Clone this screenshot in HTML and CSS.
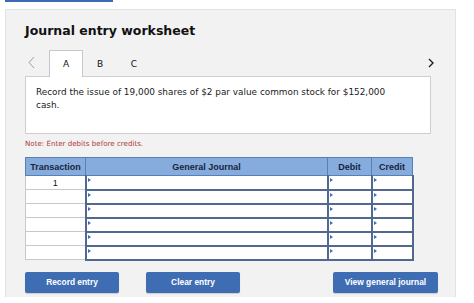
FILE: index.html
```html
<!DOCTYPE html>
<html>
<head>
<meta charset="utf-8">
<link rel="stylesheet" href="styles.css">
</head>
<body>
<div class="topbar"></div>
<div class="panel">
  <h1 class="title">Journal entry worksheet</h1>
  <div class="tabs">
    <span class="nav prev">
      <svg width="7" height="13" viewBox="0 0 7 13"><path d="M6 1 L1 6.5 L6 12" fill="none" stroke="#a0a0a0" stroke-width="1"/></svg>
    </span>
    <span class="tab active">A</span>
    <span class="tab">B</span>
    <span class="tab">C</span>
    <span class="spacer"></span>
    <span class="nav next">
      <svg width="6" height="10" viewBox="0 0 6 10"><path d="M1 1 L5 5 L1 9" fill="none" stroke="#222" stroke-width="1.4"/></svg>
    </span>
  </div>
  <div class="question">Record the issue of 19,000 shares of $2 par value common stock for $152,000 cash.</div>
  <div class="note">Note: Enter debits before credits.</div>
  <table class="journal">
    <thead>
      <tr><th class="c-tr">Transaction</th><th class="c-gj">General Journal</th><th class="c-dr">Debit</th><th class="c-cr">Credit</th></tr>
    </thead>
    <tbody>
      <tr><td class="tr">1</td><td class="in"></td><td class="in"></td><td class="in"></td></tr>
      <tr><td class="tr"></td><td class="in"></td><td class="in"></td><td class="in"></td></tr>
      <tr><td class="tr"></td><td class="in"></td><td class="in"></td><td class="in"></td></tr>
      <tr><td class="tr"></td><td class="in"></td><td class="in"></td><td class="in"></td></tr>
      <tr><td class="tr"></td><td class="in"></td><td class="in"></td><td class="in"></td></tr>
      <tr><td class="tr"></td><td class="in"></td><td class="in"></td><td class="in"></td></tr>
    </tbody>
  </table>
  <div class="buttons">
    <button class="btn b-record">Record entry</button>
    <button class="btn b-clear">Clear entry</button>
    <span class="spacer"></span>
    <button class="btn b-view">View general journal</button>
  </div>
</div>
</body>
</html>
```
FILE: styles.css
```css
html, body { margin: 0; padding: 0; background: #fff; }
body { font-family: "DejaVu Sans", Verdana, sans-serif; color: #111; }

.topbar { margin-left: 5px; width: 108px; height: 2px; background: #3d6bb3; }

.panel {
  margin: 7px 0 0 5px;
  width: 451px;
  height: 288px;
  background: #f2f2f2;
  border: 1px solid #e2e2e2;
  border-bottom: none;
  box-sizing: border-box;
  padding: 0 15px 0 19px;
}

.title {
  margin: 0;
  padding-top: 13px;
  font-size: 12.5px;
  font-weight: bold;
  line-height: 16px;
  color: #111;
}

.tabs {
  display: flex;
  align-items: stretch;
  height: 27px;
  margin-top: 10px;
}
.nav { display: flex; align-items: center; }
.prev { width: 24px; padding-left: 3px; box-sizing: border-box; }
.next { width: 12px; padding-top: 1px; }
.tab {
  width: 34px;
  display: flex;
  align-items: center;
  justify-content: center;
  font-size: 9px;
  font-family: "DejaVu Sans", Verdana, sans-serif;
  box-sizing: border-box;
  border: 1px solid transparent;
  border-bottom: none;
  position: relative;
  top: 1px;
  color: #111;
}
.tab.active { background: #fff; border-color: #c8c8c8; }
.spacer { flex: 1; }

.question {
  width: 406px;
  height: 58px;
  box-sizing: border-box;
  background: #fff;
  border: 1px solid #cfcfcf;
  padding: 9px 30px 9px 10px;
  font-size: 8.9px;
  line-height: 13px;
  color: #1a1a1a;
}

.note {
  margin-top: 5px;
  font-size: 7.1px;
  line-height: 10px;
  color: #b03a3c;
}

.journal {
  margin-top: 8px;
  border-collapse: collapse;
  width: 387px;
  font-family: "Liberation Sans", Arial, sans-serif;
  table-layout: fixed;
}
.journal th {
  background: #86abdd;
  border: 1px solid #5a7fb6;
  height: 18px;
  padding: 0;
  font-size: 9px;
  font-weight: bold;
  color: #18243c;
  box-sizing: border-box;
}
.c-tr { width: 60px; }
.c-gj { width: 242px; }
.c-dr { width: 44px; }
.c-cr { width: 41px; }
.journal td {
  height: 14px;
  padding: 0;
  box-sizing: border-box;
  background: #fff;
}
.journal td.tr {
  border: 1px solid #c8c8c8;
  text-align: center;
  font-size: 9px;
  color: #111;
}
.journal td.in {
  border-left: 2px solid #51698f;
  border-right: 2px solid #51698f;
  border-bottom: 2px solid #51698f;
  position: relative;
}
.journal td.in::before {
  content: "";
  position: absolute;
  left: 1px;
  top: 2px;
  border-left: 3px solid #3d6bb3;
  border-top: 2px solid transparent;
  border-bottom: 2px solid transparent;
}

.buttons {
  display: flex;
  margin-top: 11px;
  width: 413px;
}
.btn {
  height: 21px;
  border: none;
  border-radius: 2px;
  background: #3f6db4;
  color: #fff;
  font-family: "Liberation Sans", Arial, sans-serif;
  font-weight: bold;
  font-size: 8.4px;
  padding: 0;
  box-shadow: 0 1px 1px rgba(0,0,0,0.15);
}
.b-record { width: 94px; }
.b-clear { width: 94px; margin-left: 27px; }
.b-view { width: 105px; }
```
